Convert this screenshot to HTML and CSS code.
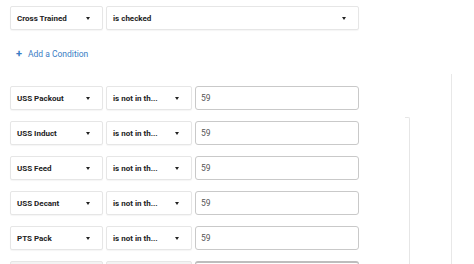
FILE: index.html
```html
<!DOCTYPE html>
<html>
<head>
<meta charset="utf-8">
<link rel="stylesheet" href="styles.css">
</head>
<body>
<div class="page">
  <div class="form">
    <div class="row">
      <div class="select sel-a"><span class="label">Cross Trained</span><span class="caret"></span></div>
      <div class="select sel-wide"><span class="label">is checked</span><span class="caret"></span></div>
    </div>
    <div class="add"><span class="plus">+</span><span>Add a Condition</span></div>
    <div class="list">
      <div class="row">
        <div class="select sel-a"><span class="label">USS Packout</span><span class="caret"></span></div>
        <div class="select sel-b"><span class="label">is not in th...</span><span class="caret"></span></div>
        <div class="input">59</div>
      </div>
      <div class="row">
        <div class="select sel-a"><span class="label">USS Induct</span><span class="caret"></span></div>
        <div class="select sel-b"><span class="label">is not in th...</span><span class="caret"></span></div>
        <div class="input">59</div>
      </div>
      <div class="row">
        <div class="select sel-a"><span class="label">USS Feed</span><span class="caret"></span></div>
        <div class="select sel-b"><span class="label">is not in th...</span><span class="caret"></span></div>
        <div class="input">59</div>
      </div>
      <div class="row">
        <div class="select sel-a"><span class="label">USS Decant</span><span class="caret"></span></div>
        <div class="select sel-b"><span class="label">is not in th...</span><span class="caret"></span></div>
        <div class="input">59</div>
      </div>
      <div class="row">
        <div class="select sel-a"><span class="label">PTS Pack</span><span class="caret"></span></div>
        <div class="select sel-b"><span class="label">is not in th...</span><span class="caret"></span></div>
        <div class="input">59</div>
      </div>
      <div class="row">
        <div class="select sel-a muted"></div>
        <div class="select sel-b muted"></div>
        <div class="input muted-input"></div>
      </div>
    </div>
  </div>
  <div class="side">
    <div class="side-inner"></div>
  </div>
</div>
</body>
</html>
```
FILE: styles.css
```css
html, body {
  margin: 0;
  padding: 0;
  background: #fff;
  overflow: hidden;
}
body {
  font-family: Roboto, "Liberation Sans", sans-serif;
  color: #222;
}
.page {
  display: flex;
  height: 264px;
  overflow: hidden;
}
.form {
  padding: 6px 0 0 10px;
  width: 349px;
  flex: none;
}
.row {
  display: flex;
  gap: 3px;
  height: 24px;
}
.select {
  box-sizing: border-box;
  height: 24px;
  border: 1px solid #e6e6e6;
  border-radius: 2px;
  box-shadow: 0 1px 1px rgba(0,0,0,0.04);
  display: flex;
  align-items: center;
  justify-content: space-between;
  padding: 0 12px 0 6px;
  font-size: 8px;
  font-weight: 700;
}
.sel-a { width: 93px; }
.sel-b { width: 86px; }
.sel-wide { width: 253px; }
.caret {
  width: 0;
  height: 0;
  border-left: 2.5px solid transparent;
  border-right: 2.5px solid transparent;
  border-top: 3.5px solid #222;
}
.input {
  box-sizing: border-box;
  width: 164px;
  height: 24px;
  border: 1px solid #c9c9c9;
  border-radius: 3px;
  padding-left: 5px;
  display: flex;
  align-items: center;
  font-size: 8.5px;
  color: #555;
}
.muted { background: #f3f3f3; border-color: #e6e6e6; }
.muted-input { border-color: #bdbdbd; border-top-width: 2px; }
.add {
  height: 47px;
  display: flex;
  align-items: center;
  gap: 6px;
  padding-left: 6px;
  font-size: 8.5px;
  color: #3b7dc4;
  margin-bottom: 9px;
}
.plus { font-size: 11px; font-weight: 700; }
.list {
  display: flex;
  flex-direction: column;
  gap: 11px;
}
.side {
  flex: 1;
  display: flex;
  padding-left: 50px;
  padding-top: 74px;
}
.side-inner {
  width: 42px;
  border-right: 1px solid #e8e8e8;
  position: relative;
}
.side-inner::before {
  content: "";
  position: absolute;
  left: -4px;
  top: 43px;
  bottom: 0;
  width: 4px;
  border-right: 1px solid #e6e6e6;
  border-top: 1px solid #e6e6e6;
  border-top-right-radius: 2px;
}
```
